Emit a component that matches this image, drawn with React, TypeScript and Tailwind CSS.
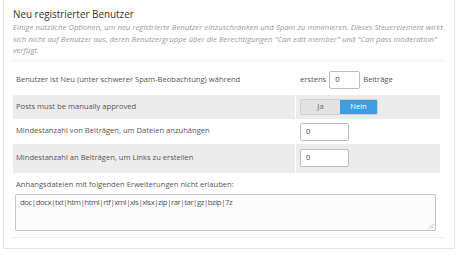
import React from "react";

const font = { fontFamily: '"Open Sans", "Noto Sans", sans-serif' };

export default function App() {
  return (
    <div className="w-[474px] h-[256px] bg-white overflow-hidden" style={font}>
      <div className="ml-[3px] w-[452px] h-[249px] border border-t-0 border-[#e6e6e6] px-[8px] pt-[6px]">
        <div className="text-[9.9px] leading-[16px] text-[#333] pl-[1px]">Neu registrierter Benutzer</div>
        <div className="text-[7.8px] leading-[11.5px] italic text-[#9a9a9a] pl-[1px] whitespace-nowrap">
          Einige nützliche Optionen, um neu registrierte Benutzer einzuschränken und Spam zu minimieren. Dieses Steuerelement wirkt
          <br />
          sich nicht auf Benutzer aus, deren Benutzergruppe über die Berechtigungen "Can edit member" und "Can pass moderation"
          <br />
          verfügt.
        </div>
        <div className="mt-[3px] border-b border-[#eeeeee] mr-[2px]" />
        <div className="mt-[4px] text-[7.6px] text-[#555] mr-[6px] ml-[1px]">
          <div className="grid grid-cols-[282px_1fr] gap-x-[1px] h-[30px] items-center">
            <div className="pl-[3px]">Benutzer ist Neu (unter schwerer Spam-Beobachtung) während</div>
            <div className="flex items-center pl-[4px] h-full">
              <span>erstens</span>
              <div className="ml-[3px] w-[31px] h-[18px] border border-[#bdbdbd] rounded-[2px] flex items-center pl-[5px] text-[#444]">0</div>
              <span className="ml-[3px]">Beiträge</span>
            </div>
          </div>
          <div className="grid grid-cols-[282px_1fr] gap-x-[1px] h-[24px]">
            <div className="bg-[#ececec] pl-[3px] flex items-center">Posts must be manually approved</div>
            <div className="bg-[#ececec] pl-[4px] flex items-center">
              <div className="flex h-[16px] w-[78px] rounded-[2px] overflow-hidden border border-[#cfcfcf]">
                <div className="w-[39px] bg-[#e2e2e2] flex items-center justify-center text-[#666]">Ja</div>
                <div className="flex-1 bg-[#3d9de0] flex items-center justify-center text-white">Nein</div>
              </div>
            </div>
          </div>
          <div className="grid grid-cols-[282px_1fr] gap-x-[1px] h-[25px]">
            <div className="pl-[3px] flex items-center">Mindestanzahl von Beiträgen, um Dateien anzuhängen</div>
            <div className="pl-[4px] flex items-center pt-[2px]">
              <div className="w-[49px] h-[18px] border border-[#bdbdbd] rounded-[2px] bg-white flex items-center pl-[5px] text-[#444]">0</div>
            </div>
          </div>
          <div className="grid grid-cols-[282px_1fr] gap-x-[1px] h-[29px]">
            <div className="bg-[#ececec] pl-[3px] flex items-center">Mindestanzahl an Beiträgen, um Links zu erstellen</div>
            <div className="bg-[#ececec] pl-[4px] flex items-center">
              <div className="w-[49px] h-[18px] border border-[#bdbdbd] rounded-[2px] bg-white flex items-center pl-[5px] text-[#444]">0</div>
            </div>
          </div>
        </div>
        <div className="mt-[6px] ml-[4px] text-[7.6px] leading-[11px] text-[#555]">Anhangsdateien mit folgenden Erweiterungen nicht erlauben:</div>
        <div className="relative mt-[4px] ml-[3px] mr-[10px] h-[37px] border border-[#c4c4c4] rounded-[2px] bg-[#fcfcfc] px-[4px] pt-[2px] text-[7.8px] leading-[11px] text-[#555] tracking-[-0.45px]">
          doc|docx|txt|htm|html|rtf|xml|xls|xlsx|zip|rar|tar|gz|bzip|7z
          <svg className="absolute right-[1px] bottom-[1px]" width="6" height="6" viewBox="0 0 6 6">
            <path d="M5.5 1 L1 5.5 M5.5 3.5 L3.5 5.5" stroke="#aaa" strokeWidth="0.8" />
          </svg>
        </div>
        <div className="mt-[6px] border-b border-[#eeeeee] mr-[2px]" />
      </div>
    </div>
  );
}
